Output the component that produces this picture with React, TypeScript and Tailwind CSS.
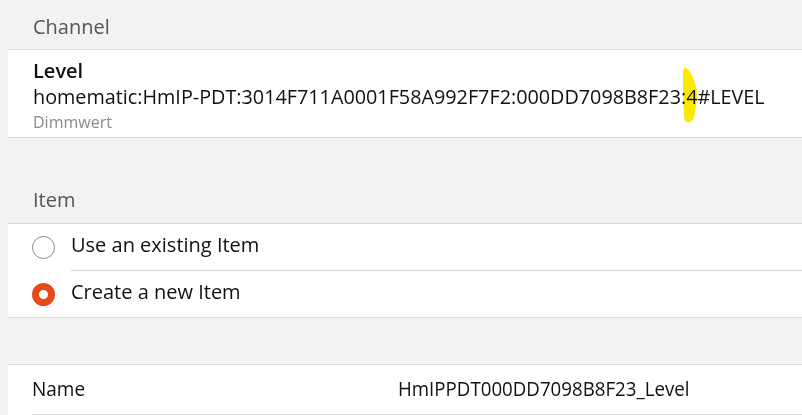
import React from "react";

const font = { fontFamily: '"Open Sans", "Noto Sans", sans-serif' };

function Radio({ checked }: { checked: boolean }) {
	return checked ? (
		<span className="w-[23px] h-[23px] rounded-full border-[7px] border-[#e64a19] bg-white shrink-0" />
	) : (
		<span className="w-[23px] h-[23px] rounded-full border border-[#8a8a8a] bg-white shrink-0" />
	);
}

export default function App() {
	return (
		<div className="w-[802px] h-[415px] overflow-hidden bg-[#f2f2f2] text-[#111]" style={font}>
			{/* Channel */}
			<div className="h-[49px] pl-[33px] pt-[15px] text-[20px] leading-[24px] text-[#555]">
				Channel
			</div>
			<div className="ml-2 bg-white border-y border-[#dcdcdc] relative">
				<div className="pl-[25px] pt-[11px] pb-[3px]">
					<div className="text-[20px] font-semibold leading-[20px]">Level</div>
					<div className="mt-[6px] text-[19.8px] leading-[20px] whitespace-nowrap">
						homematic:HmIP-PDT:3014F711A0001F58A992F7F2:000DD7098B8F23:4#LEVEL
					</div>
					<div className="mt-[4px] text-[16px] text-[#8a8a8a] leading-[23px]">Dimmwert</div>
				</div>
				{/* highlighter mark */}
				<svg
					className="absolute left-[674px] top-[17px] mix-blend-multiply"
					width="17"
					height="57"
					viewBox="0 0 17 57"
				>
					<path
						d="M2 1 C5 0 8 4 10 9 C13 15 15 20 15 28 C15 36 13 44 12 50 C11 54 8 56 5 55 C2 54 2 50 2 45 C1 35 1 20 1 10 C1 5 1 2 2 1 Z"
						fill="#ffe800"
					/>
				</svg>
			</div>

			{/* Item */}
			<div className="h-[85px] pl-[33px] pt-[50px] text-[20px] leading-[24px] text-[#555]">
				Item
			</div>
			<div className="ml-2 bg-white border-y border-[#dcdcdc]">
				<div className="flex items-center h-[47px] pl-[24px]">
					<Radio checked={false} />
					<div className="ml-[16px] flex-1 h-full flex items-center border-b border-[#d4d4d4] text-[20px] leading-[24px] pb-[5px]">
						Use an existing Item
					</div>
				</div>
				<div className="flex items-center h-[46px] pl-[24px]">
					<Radio checked={true} />
					<div className="ml-[16px] flex-1 text-[20px] leading-[24px] pb-[5px]">
						Create a new Item
					</div>
				</div>
			</div>

			<div className="h-[46px]" />

			{/* Name */}
			<div className="ml-2 bg-white border-t border-[#dcdcdc]">
				<div className="flex items-start h-[50px] ml-[24px] pt-[12px] border-b border-[#dcdcdc]">
					<div className="w-[366px] text-[20px] leading-[24px] origin-left scale-x-[0.95]">
						Name
					</div>
					<div className="text-[20px] leading-[24px] origin-left scale-x-[0.935] whitespace-nowrap">
						HmIPPDT000DD7098B8F23_Level
					</div>
				</div>
			</div>
		</div>
	);
}
